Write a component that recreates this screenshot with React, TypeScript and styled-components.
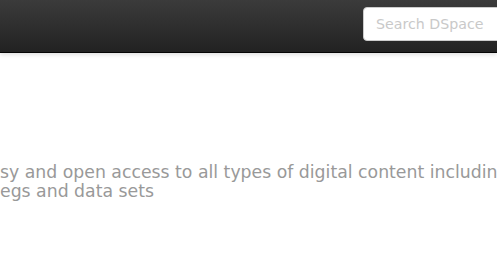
import React from "react";
import styled, { createGlobalStyle } from "styled-components";

const GlobalStyle = createGlobalStyle`
  html, body {
    margin: 0;
    padding: 0;
    background: #fff;
    overflow: hidden;
  }
  body {
    font-family: "DejaVu Sans", Verdana, sans-serif;
  }
`;

const Page = styled.div`
  width: 497px;
  height: 261px;
  overflow: hidden;
  display: flex;
  flex-direction: column;
`;

const NavBar = styled.header`
  height: 53px;
  flex-shrink: 0;
  display: flex;
  align-items: flex-start;
  justify-content: flex-end;
  padding-top: 7px;
  box-sizing: border-box;
  background: linear-gradient(180deg, #3b3b3b 0%, #222222 100%);
  border-bottom: 1px solid #050505;
  box-shadow: 0 2px 4px rgba(0, 0, 0, 0.12);
`;

const SearchInput = styled.input`
  width: 150px;
  height: 34px;
  margin-right: -16px;
  box-sizing: border-box;
  padding: 0 12px;
  border: 1px solid #cccccc;
  border-radius: 4px;
  background: #fff;
  font-family: "DejaVu Sans", Verdana, sans-serif;
  font-size: 14.2px;
  color: #555;
  outline: none;

  &::placeholder {
    color: #c9c9c9;
  }
`;

const Content = styled.main`
  padding-top: 110px;
  overflow: hidden;
`;

const Lead = styled.p`
  margin: 0;
  font-size: 17.3px;
  line-height: 19px;
  color: #999999;
  white-space: nowrap;
`;

export default function App() {
  return (
    <>
      <GlobalStyle />
      <Page>
        <NavBar>
          <SearchInput type="text" placeholder="Search DSpace" />
        </NavBar>
        <Content>
          <Lead>
            sy and open access to all types of digital content including text, images,
            <br />
            egs and data sets
          </Lead>
        </Content>
      </Page>
    </>
  );
}
